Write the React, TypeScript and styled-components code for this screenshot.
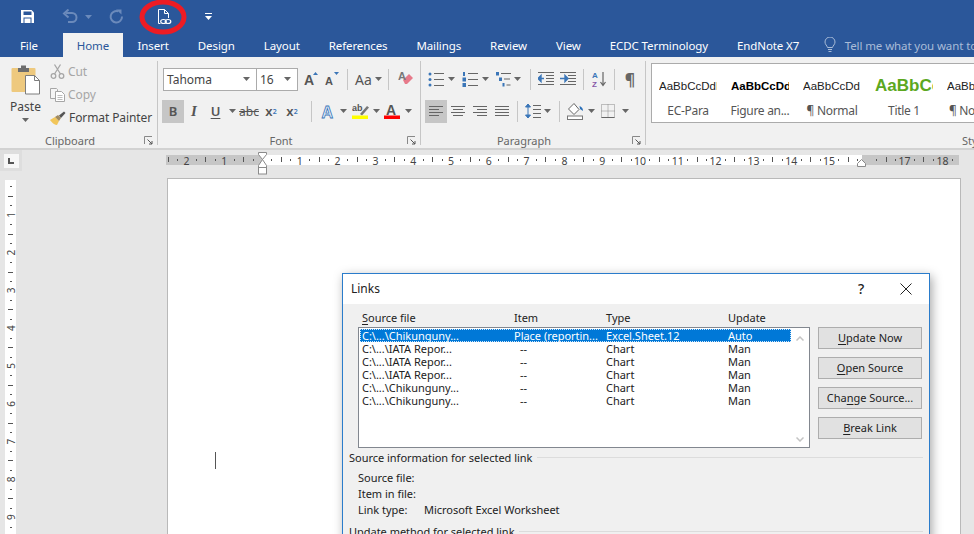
import React from "react";
import styled, { createGlobalStyle } from "styled-components";

const Global = createGlobalStyle`
  html, body { margin: 0; padding: 0; overflow: hidden; background: #e6e6e6; }
  #root { width: 974px; height: 534px; }
  * { box-sizing: border-box; }
`;
const FONT = `"Noto Sans", "Open Sans", "Liberation Sans", sans-serif`;
const Shell = styled.div`
  position: relative; width: 974px; height: 534px; overflow: hidden;
  font-family: ${FONT}; background: #e6e6e6; display: flex; flex-direction: column;
`;
const Qat = styled.div`height: 33px; background: #2b579a; display: flex; align-items: center; flex: none;`;
const QatBtn = styled.div<{ $w: number; $ml?: number }>`
  width: ${p => p.$w}px; margin-left: ${p => p.$ml ?? 0}px; height: 33px;
  display: flex; align-items: center; justify-content: center; flex: none;
`;
const Tabs = styled.div`height: 24px; background: #2b579a; display: flex; align-items: stretch; flex: none; color: #fff; font-size: 11.5px; letter-spacing: -0.1px; white-space: nowrap; overflow: hidden;`;
const Tab = styled.div<{ $active?: boolean; $w?: number; $ml?: number }>`
  flex: none; padding: 0 14.5px; display: flex; align-items: center; justify-content: center;
  margin-left: ${p => p.$ml ?? 0}px;
  ${p => p.$w ? `width: ${p.$w}px; padding: 0;` : ""}
  background: ${p => p.$active ? "#f1f1f1" : "transparent"};
  color: ${p => p.$active ? "#2b579a" : "#fff"};
`;
const Tell = styled.div`flex: none; display: flex; align-items: center; gap: 9px; margin-left: 10px; color: #a9bcd8;`;
const Ribbon = styled.div`height: 93px; background: #f1f1f1; border-bottom: 2px solid #d2d2d2; display: flex; flex: none; overflow: hidden;`;
const Group = styled.div<{ $w: number }>`
  width: ${p => p.$w}px; flex: none; height: 91px; position: relative; display: flex; flex-direction: column;
`;
const GroupBody = styled.div`flex: 1; display: flex; min-height: 0;`;
const GroupFoot = styled.div<{ $pr?: number }>`
  height: 19px; font-size: 11px; color: #666; display: flex; align-items: center; justify-content: center; padding: 4px ${p => p.$pr ?? 0}px 0 0; letter-spacing: 0;
`;
const Launcher = styled.div`position: absolute; right: 4px; bottom: 3px; line-height: 0;`;
const VDiv = styled.div`width: 1px; height: 84px; background: #c6c6c6; margin-top: 4px; flex: none;`;
const PasteCol = styled.div`width: 50px; display: flex; flex-direction: column; align-items: center; padding-top: 8px; padding-left: 1px; font-size: 12px; color: #444; gap: 3px;`;
const ClipCol = styled.div`display: flex; flex-direction: column; padding-top: 3px;`;
const ClipRow = styled.div<{ $dim?: boolean }>`
  height: 23.5px; display: flex; align-items: center; gap: 3px; font-size: 12px; letter-spacing: -0.1px; white-space: nowrap; color: ${p => p.$dim ? "#a6a6a6" : "#444"};
`;
const Rows = styled.div<{ $pl: number }>`display: flex; flex-direction: column; padding-left: ${p => p.$pl}px; padding-top: 10px; gap: 8px;`;
const Row = styled.div`display: flex; align-items: center; height: 24px;`;
const Combo = styled.div<{ $w: number }>`
  width: ${p => p.$w}px; height: 23px; background: #fff; border: 1px solid #ababab; margin-right: -1px;
  display: flex; align-items: center; justify-content: space-between; padding: 0 6px 0 3px; font-size: 12px; color: #444; flex: none;
`;
const Btn = styled.div<{ $w: number; $on?: boolean; $ml?: number }>`
  width: ${p => p.$w}px; height: 23px; flex: none; display: flex; align-items: center; justify-content: center;
  margin-left: ${p => p.$ml ?? 0}px; background: ${p => p.$on ? "#c6c6c6" : "transparent"}; color: #555;
  font-size: 13px; font-weight: 600;
`;
const Sep = styled.div<{ $mx: number; $ml?: number }>`
  width: 1px; height: 21px; background: #c6c6c6; flex: none; margin: 0 ${p => p.$mx}px 0 ${p => p.$ml ?? p.$mx}px;
`;
const StylesWrap = styled.div`flex: 1; min-width: 0; padding: 6px 0 0 5px; position: relative;`;
const StyleBox = styled.div`
  height: 60px; background: #fff; border: 1px solid #ababab; border-right: none; display: flex; overflow: hidden;
`;
const StyleItem = styled.div`width: 72px; flex: none; display: flex; flex-direction: column; align-items: center; overflow: hidden;`;
const Preview = styled.div<{ $bold?: boolean; $big?: boolean }>`
  width: 58px; height: 33px; overflow: hidden; white-space: nowrap; margin-top: 5px; display: flex; align-items: center; flex: none;
  font-family: "Liberation Sans", sans-serif;
  font-size: ${p => p.$big ? 17 : 11.5}px; font-weight: ${p => p.$bold || p.$big ? 700 : 400};
  color: ${p => p.$big ? "#5ca81e" : p.$bold ? "#000" : "#222"};
`;
const StyleName = styled.div`font-size: 12px; color: #555; white-space: nowrap; letter-spacing: -0.3px;`;
const StyFoot = styled.div`position: absolute; left: 316px; bottom: 0; font-size: 11px; color: #666; white-space: nowrap; height: 19px; padding-top: 4px; display: flex; align-items: center;`;
const RulerRow = styled.div`height: 28px; flex: none; display: flex; align-items: flex-start; background: #e6e6e6;`;
const Corner = styled.div`width: 22px; height: 21px; background: #dedede; display: flex; align-items: center; justify-content: center; flex: none;`;
const CornerBox = styled.div`width: 15px; height: 14px; background: #f7f7f7; display: flex; align-items: center; justify-content: center;`;
const HRulerSvg = styled.svg`margin-left: 144px; flex: none; display: block;`;
const Work = styled.div`flex: 1; min-height: 0; display: flex; background: #e6e6e6;`;
const VRulerSvg = styled.svg`margin-left: 5px; margin-top: 2px; flex: none; display: block;`;
const Page = styled.div`
  margin-left: 151px; width: 794px; height: 400px; background: #fff; border: solid #b9b9b9; border-width: 1px 1px 0 1px; flex: none;
  padding: 273px 0 0 47px;
`;
const Caret = styled.div`width: 1px; height: 17px; background: #555;`;
const RedRing = styled.svg`position: absolute; left: 138px; top: 0; pointer-events: none;`;

const Dialog = styled.div`
  position: absolute; left: 342px; top: 273px; width: 588px; height: 300px;
  background: #f0f0f0; border: 1px solid #2a7ccb; box-shadow: 2px 3px 10px rgba(0,0,0,.35);
  font-size: 11px; color: #222; display: flex; flex-direction: column; letter-spacing: -0.02px;
`;
const DlgTitle = styled.div`height: 30px; background: #fff; display: flex; align-items: center; padding: 0 0 1px 8px; font-size: 12px; flex: none; color: #222;`;
const TitleSpacer = styled.div`flex: 1;`;
const HelpMark = styled.div`width: 46px; font-size: 14px; text-align: center; font-weight: 500; padding-left: 2px;`;
const CloseBtn = styled.div`width: 46px; display: flex; justify-content: center;`;
const DlgMain = styled.div`display: flex; padding: 6px 7px 0 15px; flex: none;`;
const ListCol = styled.div`width: 452px; flex: none;`;
const HeadRow = styled.div`height: 17px; display: grid; grid-template-columns: 152px 92px 122px 1fr; padding: 0 0 2px 4px; align-items: center;`;
const ListBox = styled.div`height: 121px; background: #fff; border: 1px solid #82878f; display: flex; padding: 1px 1px 0 1px;`;
const ListRows = styled.div`width: 431px; flex: none;`;
const LRow = styled.div<{ $sel?: boolean }>`
  height: 13px; display: grid; grid-template-columns: 152px 92px 122px 1fr; padding-left: 2px; align-items: center; white-space: nowrap; line-height: 13px;
  background: ${p => p.$sel ? "#0078d7" : "transparent"}; color: ${p => p.$sel ? "#fff" : "#222"};
  outline: ${p => p.$sel ? "1px dotted #cfe6fa" : "none"}; outline-offset: -1px;
`;
const DashCell = styled.span`padding-left: 6px;`;
const Scroll = styled.div`flex: 1; display: flex; flex-direction: column; justify-content: space-between; align-items: center; padding: 7px 0 5px;`;
const BtnCol = styled.div`margin-left: 8px; display: flex; flex-direction: column; gap: 8px; width: 104px; flex: none; padding-top: 17px;`;
const DBtn = styled.div`height: 22px; background: #e1e1e1; border: 1px solid #adadad; display: flex; align-items: center; justify-content: center; white-space: nowrap; color: #222; padding-bottom: 2px;`;
const Under = styled.span`text-decoration: underline; text-underline-offset: 2px;`;
const Legend = styled.div<{ $mt: number }>`display: flex; align-items: center; gap: 5px; margin: ${p => p.$mt}px 6px 0 6px; height: 14px; white-space: nowrap;`;
const LegendLine = styled.div`flex: 1; height: 1px; background: #dcdcdc;`;
const InfoRows = styled.div`padding: 7px 0 0 15px; display: flex; flex-direction: column; gap: 3px;`;
const InfoRow = styled.div`height: 13px; line-height: 13px; display: grid; grid-template-columns: 66px 1fr; white-space: nowrap;`;

const Caretd = ({ c = "#666" }: { c?: string }) => (
  <svg width="7" height="4" viewBox="0 0 7 4"><path d="M0 0h7L3.5 4z" fill={c} /></svg>
);
const Ic = ({ w = 16, h = 16, children }: { w?: number; h?: number; children: React.ReactNode }) => (
  <svg width={w} height={h} viewBox={`0 0 ${w} ${h}`} fill="none" style={{ flex: "none" }}>{children}</svg>
);
const LauncherIcon = () => (
  <svg width="9" height="9" viewBox="0 0 9 9" fill="none"><path d="M.5 8V.5H8" stroke="#888" /><path d="M3.5 3.5L8 8M8 5v3H5" stroke="#555" /></svg>
);

const SaveIcon = () => (
  <Ic w={15} h={15}>
    <path d="M1 1h10.5L14 3.5V14H1z" fill="#fff" />
    <rect x="3.5" y="2.5" width="8" height="3.5" fill="#2b579a" />
    <rect x="3.5" y="8.5" width="8" height="5.5" fill="#2b579a" /><rect x="4.5" y="9.5" width="6" height="4.5" fill="#fff" />
  </Ic>
);
const UndoIcon = () => (
  <Ic w={16} h={15}><path d="M4 4h6a4.5 4.5 0 0 1 0 9H6" stroke="#6b8abb" strokeWidth="2" /><path d="M6.5 0.5L2 4.5l4.5 4" stroke="#6b8abb" strokeWidth="2" /></Ic>
);
const RedoIcon = () => (
  <Ic w={15} h={15}><path d="M9.2 2.4A5.7 5.7 0 1 0 13 7.5" stroke="#6b8abb" strokeWidth="2" /><path d="M7 .5h5.5v5" fill="#6b8abb" /></Ic>
);
const DocLinkIcon = () => (
  <Ic w={15} h={16}>
    <path d="M3.5 14.500H1.500V.5H7.500L11.500 4.500V9M7.500 .5V4.500H11.500" stroke="#fff" />
    <ellipse cx="6.500" cy="12.500" rx="2.800" ry="2" stroke="#fff" strokeWidth="1.200" />
    <ellipse cx="11" cy="12.500" rx="2.800" ry="2" stroke="#fff" strokeWidth="1.200" />
  </Ic>
);
const MoreIcon = () => (
  <Ic w={7} h={8}><rect y="0" width="7" height="1" fill="#fff" /><path d="M0 3h7L3.5 7z" fill="#fff" /></Ic>
);
const Bulb = () => (
  <Ic w={12} h={16}>
    <path d="M3.5 10.5C3 8.5 1 7.5 1 5a5 5 0 0 1 10 0c0 2.5-2 3.5-2.5 5.5z" stroke="#a9bcd8" />
    <path d="M4 12.5h4M4.5 14.5h3" stroke="#a9bcd8" />
  </Ic>
);
const PasteIcon = () => (
  <Ic w={29} h={30}>
    <rect x="0.5" y="3" width="24" height="24" rx="1" fill="#eec97e" />
    <rect x="7" y="3" width="11" height="4" fill="#6d6d6d" /><rect x="10" y="0.5" width="5" height="3" fill="#6d6d6d" />
    <path d="M14.5 10.5h9l5 5v13.5h-14z" fill="#fff" stroke="#7d7d7d" />
    <path d="M23.5 10.5v5h5" stroke="#7d7d7d" />
  </Ic>
);
const CutIcon = () => (
  <Ic w={15} h={15}><circle cx="3.5" cy="12" r="2.3" stroke="#a6a6a6" strokeWidth="1.3" /><circle cx="11.5" cy="12" r="2.3" stroke="#a6a6a6" strokeWidth="1.3" /><path d="M4.5 10L10.5 0.5M10.5 10L4.5 0.5" stroke="#a6a6a6" strokeWidth="1.3" /></Ic>
);
const CopyIcon = () => (
  <Ic w={15} h={14}><path d="M.5.5h6l1 1v9H.5z" stroke="#a6a6a6" fill="#f5f5f5" /><path d="M5.5 3.5h6l3 3v7h-9z" stroke="#a6a6a6" fill="#fff" /><path d="M7.5 7.5h5M7.5 9.5h5M7.5 11.5h5" stroke="#bdbdbd" /></Ic>
);
const BrushIcon = () => (
  <Ic w={16} h={14}><path d="M0 9l5-3 4 4-2 4c-2 0-5-2-7-5z" fill="#f2c65a" /><path d="M5 6l3-2 3 3-2 3z" fill="#a08a60" /><path d="M9 4.5l5-4 1.5 1.5-4.5 5z" fill="#555" /></Ic>
);
const Lines = ({ d, c = "#666" }: { d: string; c?: string }) => (
  <Ic w={16} h={14}><path d={d} stroke={c} /></Ic>
);
const AlignLeft = () => <Lines d="M1 2.5h14M1 5.5h10M1 8.5h14M1 11.5h10" />;
const AlignCenter = () => <Lines d="M1 2.5h14M3 5.5h10M1 8.5h14M3 11.5h10" />;
const AlignRight = () => <Lines d="M1 2.5h14M5 5.5h10M1 8.5h14M5 11.5h10" />;
const AlignJustify = () => <Lines d="M1 2.5h14M1 5.5h14M1 8.5h14M1 11.5h14" />;
const ListIcon = ({ k }: { k: "b" | "n" | "m" }) => (
  <Ic w={16} h={15}>
    {k === "b" && <><circle cx="2" cy="2" r="1.5" fill="#3b76b8" /><circle cx="2" cy="7.5" r="1.5" fill="#3b76b8" /><circle cx="2" cy="13" r="1.5" fill="#3b76b8" /></>}
    {k === "n" && <><rect x="1" y="0" width="2" height="4" fill="#3b76b8" /><rect x="0.5" y="5.5" width="3.5" height="4" fill="#3b76b8" /><rect x="0.5" y="11" width="3.5" height="4" fill="#3b76b8" /></>}
    {k === "m" && <><rect x="0" y="0" width="3" height="3.5" fill="#3b76b8" /><rect x="3" y="5.5" width="3" height="3.5" fill="#3b76b8" /><rect x="6.5" y="11" width="2" height="3.5" fill="#3b76b8" /></>}
    <path d={k === "m" ? "M5 1.5h10M8 7h6M10.5 13h4" : "M6 1.5h10M6 7.5h10M6 13.5h10"} stroke="#666" />
  </Ic>
);
const IndentIcon = ({ rev }: { rev?: boolean }) => (
  <Ic w={16} h={14}>
    <path d="M0 .5h16M8 3.5h8M8 6.5h8M8 9.5h8M0 12.5h16" stroke="#666" />
    <path d={rev ? "M0 6.5h6M3 3.5l-3 3 3 3z" : "M0 6.5h5M5 3.5l3 3-3 3z"} stroke="#3b76b8" fill="#3b76b8" strokeWidth="1.4" />
  </Ic>
);
const SortIcon = () => (
  <Ic w={15} h={16}>
    <text x="0" y="7" fontSize="8" fontWeight="700" fill="#3b76b8" fontFamily="Liberation Sans">A</text>
    <text x="0" y="15.5" fontSize="8" fontWeight="700" fill="#8757a8" fontFamily="Liberation Sans">Z</text>
    <path d="M11 1v13M8.5 11l2.5 3.5 2.5-3.5" stroke="#666" strokeWidth="1.2" />
  </Ic>
);
const LineSpacing = () => (
  <Ic w={16} h={16}>
    <path d="M3 1v14M.5 4L3 1l2.5 3zM.5 12L3 15l2.5-3z" stroke="#3b76b8" fill="#3b76b8" />
    <path d="M8 2.5h8M8 6.5h8M8 10.5h8M8 14.5h8" stroke="#666" />
  </Ic>
);
const Shading = () => (
  <Ic w={17} h={17}>
    <path d="M7 .5L1.5 6 7 11.5 12 6.5z" fill="#fff" stroke="#666" />
    <path d="M12.5 3c2 1 3.5 2 3.5 5-1-1-2-1-3-2z" fill="#2a6fb8" />
    <rect x=".5" y="13" width="15" height="3.5" fill="#fff" stroke="#777" />
  </Ic>
);
const Borders = () => (
  <Ic w={14} h={14}>
    <rect x=".5" y=".5" width="13" height="13" stroke="#888" strokeDasharray="1 1" />
    <path d="M7 .5v13M.5 7h13" stroke="#888" strokeDasharray="1 1" />
    <path d="M.5 13.5h13" stroke="#666" />
  </Ic>
);
const Eraser = () => (
  <Ic w={16} h={16}>
    <path d="M5 9L11 3l4 4-6 6H7z" fill="#e77a8a" />
    <text x="0" y="9" fontSize="11" fontWeight="700" fill="#777" fontFamily="Liberation Sans">A</text>
  </Ic>
);
const BigA = ({ up }: { up?: boolean }) => (
  <Ic w={14} h={14}>
    <text x="0" y="13" fontSize={up ? 14 : 11} fontFamily="Liberation Sans" fill="#555">A</text>
    <path d={up ? "M9 3l2.5-3L14 3z" : "M9 0h5l-2.5 3z"} fill="#3b76b8" />
  </Ic>
);
const TextEffect = () => (
  <Ic w={15} h={15}><text x="0.5" y="13.5" fontSize="16" fontWeight="700" fontFamily="Liberation Sans" fill="#e8f1fb" stroke="#3b76b8" strokeWidth=".8">A</text></Ic>
);
const Highlight = () => (
  <Ic w={17} h={16}>
    <text x="0" y="8" fontSize="9" fill="#555" fontFamily="Liberation Sans">ab</text>
    <path d="M8 11l7-8 2 1.5-7 8z" fill="#777" />
    <rect x="0" y="12.5" width="16" height="3.5" fill="#ff0" />
  </Ic>
);
const FontColor = () => (
  <Ic w={16} h={16}>
    <text x="2" y="11.5" fontSize="14" fontFamily="Liberation Sans" fill="#555">A</text>
    <rect x="0" y="12.5" width="16" height="3.5" fill="#f00" />
  </Ic>
);
const Underlined = styled.span`text-decoration: underline; text-underline-offset: 2px;`;
const Struck = styled.span`text-decoration: line-through; font-size: 12px; font-weight: 400;`;
const Script = styled.sub<{ $up?: boolean }>`font-size: 7px; color: #3b76b8; vertical-align: ${p => p.$up ? "super" : "sub"};`;
const ItalicMark = styled.span`font-family: "Liberation Serif", serif; font-style: italic; font-size: 15px;`;
const Pilcrow = styled.span`font-size: 16px; color: #666; font-weight: 700;`;
const AaText = styled.span`font-size: 14px; font-weight: 400;`;

const HRuler = () => {
  const zero = 96;
  const ticks: React.ReactNode[] = [];
  const cm = 37.8;
  for (let i = -3; i <= 19; i++) {
    const x = zero + i * cm;
    if (i !== 0 && i !== 16 && x > 0 && x < 793) {
      ticks.push(<text key={`n${i}`} x={x} y="14.5" fontSize="10.5" fill="#444" textAnchor="middle" fontFamily={FONT}>{Math.abs(i)}</text>);
    }
    [0.25, 0.75].forEach(f => {
      const px = x + f * cm;
      if (px > 1 && px < 792) ticks.push(<rect key={`d${i}${f}`} x={Math.round(px)} y="9" width="1" height="2" fill="#555" />);
    });
    const mid = x + 0.5 * cm;
    if (mid > 0 && mid < 792) ticks.push(<rect key={`m${i}`} x={Math.round(mid)} y="7" width="1" height="5" fill="#555" />);
  }
  return (
    <HRulerSvg width="796" height="28" viewBox="0 0 796 28">
      <rect x="0" y="5" width="793" height="10" fill="#c6c6c6" />
      <rect x="96" y="5" width="600" height="10" fill="#fff" />
      {ticks}
      <path d="M92.5 2.5h8v2l-4 5-4-5zM92.5 17.5v-2l4-6 4 6v2z" fill="#fff" stroke="#8a8a8a" />
      <rect x="92.5" y="17.5" width="8" height="6.5" fill="#fff" stroke="#8a8a8a" />
      <path d="M691.5 16.5v-3l4-4 4 4v3z" fill="#fff" stroke="#8a8a8a" />
    </HRulerSvg>
  );
};
const VRuler = () => {
  const zero = -3;
  const items: React.ReactNode[] = [];
  const cm = 37.8;
  for (let i = 0; i <= 10; i++) {
    const y = zero + i * cm;
    if (i > 0) items.push(<text key={`n${i}`} x="0" y="0" fontSize="10" fill="#444" textAnchor="middle" fontFamily={FONT} transform={`translate(9.5 ${y}) rotate(-90)`}>{i}</text>);
    items.push(<rect key={`a${i}`} x="5" y={Math.round(y + cm * 0.25)} width="2" height="1" fill="#555" />);
    items.push(<rect key={`b${i}`} x="3" y={Math.round(y + cm * 0.5)} width="5" height="1" fill="#555" />);
    items.push(<rect key={`c${i}`} x="5" y={Math.round(y + cm * 0.75)} width="2" height="1" fill="#555" />);
  }
  return (
    <VRulerSvg width="11" height="354" viewBox="0 0 11 354">
      <rect width="11" height="354" fill="#fff" />
      {items}
    </VRulerSvg>
  );
};

const rows = [
  ["C:\\...\\IATA Repor...", "Man"],
  ["C:\\...\\IATA Repor...", "Man"],
  ["C:\\...\\IATA Repor...", "Man"],
  ["C:\\...\\Chikunguny...", "Man"],
  ["C:\\...\\Chikunguny...", "Man"],
];
const styleItems = [
  { p: "AaBbCcDdEe", n: "EC-Para" },
  { p: "AaBbCcDdE", n: "Figure an...", bold: true },
  { p: "AaBbCcDd", n: "¶ Normal" },
  { p: "AaBbCc", n: "Title 1", big: true },
  { p: "AaBbCcDd", n: "¶ No Spac" },
];

export default function App() {
  return (
    <Shell>
      <Global />
      <Qat>
        <QatBtn $w={15} $ml={20}><SaveIcon /></QatBtn>
        <QatBtn $w={16} $ml={27}><UndoIcon /></QatBtn>
        <QatBtn $w={8} $ml={6}><Caretd c="#6b8abb" /></QatBtn>
        <QatBtn $w={15} $ml={17}><RedoIcon /></QatBtn>
        <QatBtn $w={15} $ml={33}><DocLinkIcon /></QatBtn>
        <QatBtn $w={7} $ml={33}><MoreIcon /></QatBtn>
      </Qat>
      <Tabs>
        <Tab $w={58}>File</Tab>
        <Tab $active $w={60} $ml={5}>Home</Tab>
        <Tab>Insert</Tab>
        <Tab>Design</Tab>
        <Tab>Layout</Tab>
        <Tab>References</Tab>
        <Tab>Mailings</Tab>
        <Tab>Review</Tab>
        <Tab>View</Tab>
        <Tab>ECDC Terminology</Tab>
        <Tab>EndNote X7</Tab>
        <Tell><Bulb />Tell me what you want to do</Tell>
      </Tabs>
      <Ribbon>
        <Group $w={157}>
          <GroupBody>
            <PasteCol>
              <PasteIcon />
              Paste
              <Caretd />
            </PasteCol>
            <ClipCol>
              <ClipRow $dim><CutIcon />Cut</ClipRow>
              <ClipRow $dim><CopyIcon />Copy</ClipRow>
              <ClipRow><BrushIcon />Format Painter</ClipRow>
            </ClipCol>
          </GroupBody>
          <GroupFoot $pr={17}>Clipboard</GroupFoot>
          <Launcher><LauncherIcon /></Launcher>
        </Group>
        <VDiv />
        <Group $w={262}>
          <GroupBody>
            <Rows $pl={5}>
              <Row>
                <Combo $w={94}>Tahoma<Caretd /></Combo>
                <Combo $w={42}>16<Caretd /></Combo>
                <Btn $w={21} $ml={3}><BigA up /></Btn>
                <Btn $w={21}><BigA /></Btn>
                <Sep $mx={5} />
                <Btn $w={21}><AaText>Aa</AaText></Btn>
                <Btn $w={8}><Caretd /></Btn>
                <Sep $mx={6} />
                <Btn $w={22}><Eraser /></Btn>
              </Row>
              <Row>
                <Btn $w={22} $on $ml={-1}>B</Btn>
                <Btn $w={20}><ItalicMark>I</ItalicMark></Btn>
                <Btn $w={23}><Underlined>U</Underlined></Btn>
                <Btn $w={10}><Caretd /></Btn>
                <Btn $w={24}><Struck>abc</Struck></Btn>
                <Btn $w={20}>x<Script>2</Script></Btn>
                <Btn $w={22}>x<Script $up>2</Script></Btn>
                <Sep $mx={7} $ml={8} />
                <Btn $w={18}><TextEffect /></Btn>
                <Btn $w={12}><Caretd /></Btn>
                <Btn $w={22}><Highlight /></Btn>
                <Btn $w={10}><Caretd /></Btn>
                <Btn $w={22}><FontColor /></Btn>
                <Btn $w={10}><Caretd /></Btn>
              </Row>
            </Rows>
          </GroupBody>
          <GroupFoot $pr={16}>Font</GroupFoot>
          <Launcher><LauncherIcon /></Launcher>
        </Group>
        <VDiv />
        <Group $w={224}>
          <GroupBody>
            <Rows $pl={4}>
              <Row>
                <Btn $w={22}><ListIcon k="b" /></Btn>
                <Btn $w={8}><Caretd /></Btn>
                <Btn $w={22} $ml={4}><ListIcon k="n" /></Btn>
                <Btn $w={8}><Caretd /></Btn>
                <Btn $w={18} $ml={6}><ListIcon k="m" /></Btn>
                <Btn $w={9}><Caretd /></Btn>
                <Sep $mx={4} $ml={8} />
                <Btn $w={22}><IndentIcon rev /></Btn>
                <Btn $w={22}><IndentIcon /></Btn>
                <Sep $mx={5} $ml={4} />
                <Btn $w={21}><SortIcon /></Btn>
                <Sep $mx={4} $ml={4} />
                <Btn $w={22}><Pilcrow>¶</Pilcrow></Btn>
              </Row>
              <Row>
                <Btn $w={22} $on><AlignLeft /></Btn>
                <Btn $w={22}><AlignCenter /></Btn>
                <Btn $w={22}><AlignRight /></Btn>
                <Btn $w={22}><AlignJustify /></Btn>
                <Sep $mx={5} $ml={4} />
                <Btn $w={20}><LineSpacing /></Btn>
                <Btn $w={8}><Caretd /></Btn>
                <Sep $mx={5} $ml={8} />
                <Btn $w={20}><Shading /></Btn>
                <Btn $w={12}><Caretd /></Btn>
                <Btn $w={22}><Borders /></Btn>
                <Btn $w={12}><Caretd /></Btn>
              </Row>
            </Rows>
          </GroupBody>
          <GroupFoot $pr={18}>Paragraph</GroupFoot>
          <Launcher><LauncherIcon /></Launcher>
        </Group>
        <VDiv />
        <StylesWrap>
          <StyleBox>
            {styleItems.map(s => (
              <StyleItem key={s.n}>
                <Preview $bold={s.bold} $big={s.big}>{s.p}</Preview>
                <StyleName>{s.n}</StyleName>
              </StyleItem>
            ))}
          </StyleBox>
          <StyFoot>Styles</StyFoot>
        </StylesWrap>
      </Ribbon>
      <RulerRow>
        <Corner>
          <CornerBox>
            <svg width="6" height="6" viewBox="0 0 6 6"><path d="M1 0v5h5" stroke="#555" strokeWidth="2" fill="none" /></svg>
          </CornerBox>
        </Corner>
        <HRuler />
      </RulerRow>
      <Work>
        <VRuler />
        <Page><Caret /></Page>
      </Work>

      <RedRing width="50" height="35" viewBox="0 0 50 35">
        <ellipse cx="25" cy="17" rx="21" ry="15" fill="none" stroke="#ed1c24" strokeWidth="5" />
      </RedRing>

      <Dialog>
        <DlgTitle>
          Links
          <TitleSpacer />
          <HelpMark>?</HelpMark>
          <CloseBtn>
            <svg width="12" height="12" viewBox="0 0 12 12"><path d="M.5.5l11 11M11.5.5l-11 11" stroke="#222" /></svg>
          </CloseBtn>
        </DlgTitle>
        <DlgMain>
          <ListCol>
            <HeadRow>
              <span><Under>S</Under>ource file</span><span>Item</span><span>Type</span><span>Update</span>
            </HeadRow>
            <ListBox>
              <ListRows>
                <LRow $sel><span>C:\...\Chikunguny...</span><span>Place (reportin...</span><span>Excel.Sheet.12</span><span>Auto</span></LRow>
                {rows.map((r, i) => (
                  <LRow key={i}><span>{r[0]}</span><DashCell>--</DashCell><span>Chart</span><span>{r[1]}</span></LRow>
                ))}
              </ListRows>
              <Scroll>
                <svg width="8" height="5" viewBox="0 0 8 5"><path d="M.5 4.5L4 1l3.5 3.5" stroke="#c4c4c4" strokeWidth="1.5" fill="none" /></svg>
                <svg width="8" height="5" viewBox="0 0 8 5"><path d="M.5.5L4 4 7.5.5" stroke="#c4c4c4" strokeWidth="1.5" fill="none" /></svg>
              </Scroll>
            </ListBox>
          </ListCol>
          <BtnCol>
            <DBtn><Under>U</Under>pdate Now</DBtn>
            <DBtn><Under>O</Under>pen Source</DBtn>
            <DBtn>Cha<Under>n</Under>ge Source...</DBtn>
            <DBtn><Under>B</Under>reak Link</DBtn>
          </BtnCol>
        </DlgMain>
        <Legend $mt={2}>Source information for selected link<LegendLine /></Legend>
        <InfoRows>
          <InfoRow><span>Source file:</span><span /></InfoRow>
          <InfoRow><span>Item in file:</span><span /></InfoRow>
          <InfoRow><span>Link type:</span><span>Microsoft Excel Worksheet</span></InfoRow>
        </InfoRows>
        <Legend $mt={8}>Update method for selected link<LegendLine /></Legend>
      </Dialog>
    </Shell>
  );
}
